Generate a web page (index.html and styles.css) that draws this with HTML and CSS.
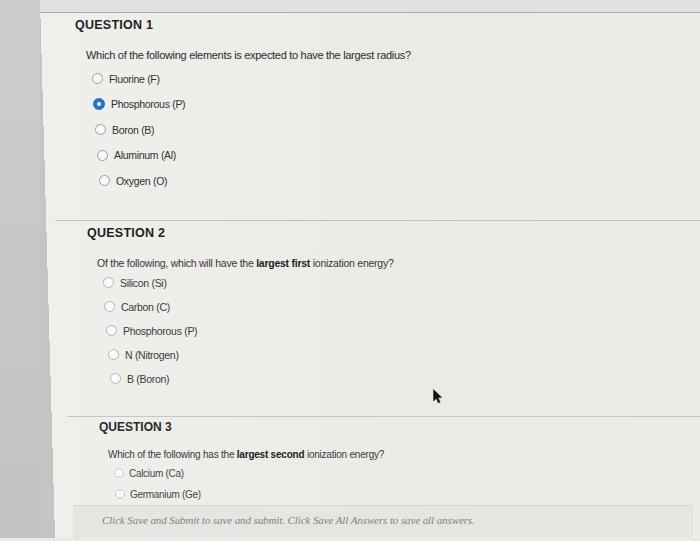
FILE: index.html
```html
<!DOCTYPE html>
<html lang="en">
<head>
<meta charset="utf-8">
<title>Quiz</title>
<link rel="stylesheet" href="styles.css">
</head>
<body>
<div class="screen">
  <div class="bezel"></div>
  <main class="page">
    <div class="topbar"></div>

    <section class="question q1">
      <h2 class="q-title">QUESTION 1</h2>
      <p class="q-text">Which of the following elements is expected to have the largest radius?</p>
      <ul class="opts">
        <li class="opt"><span class="radio"></span><span class="opt-label">Fluorine (F)</span></li>
        <li class="opt"><span class="radio radio-on"></span><span class="opt-label">Phosphorous (P)</span></li>
        <li class="opt"><span class="radio"></span><span class="opt-label">Boron (B)</span></li>
        <li class="opt"><span class="radio"></span><span class="opt-label">Aluminum (Al)</span></li>
        <li class="opt"><span class="radio"></span><span class="opt-label">Oxygen (O)</span></li>
      </ul>
    </section>

    <section class="question q2">
      <h2 class="q-title">QUESTION 2</h2>
      <p class="q-text">Of the following, which will have the <b>largest first</b> ionization energy?</p>
      <ul class="opts">
        <li class="opt"><span class="radio"></span><span class="opt-label">Silicon (Si)</span></li>
        <li class="opt"><span class="radio"></span><span class="opt-label">Carbon (C)</span></li>
        <li class="opt"><span class="radio"></span><span class="opt-label">Phosphorous (P)</span></li>
        <li class="opt"><span class="radio"></span><span class="opt-label">N (Nitrogen)</span></li>
        <li class="opt"><span class="radio"></span><span class="opt-label">B (Boron)</span></li>
      </ul>
    </section>

    <section class="question q3">
      <h2 class="q-title">QUESTION 3</h2>
      <p class="q-text">Which of the following has the <b>largest second</b> ionization energy?</p>
      <ul class="opts">
        <li class="opt"><span class="radio"></span><span class="opt-label">Calcium (Ca)</span></li>
        <li class="opt"><span class="radio"></span><span class="opt-label">Germanium (Ge)</span></li>
      </ul>
    </section>

    <div class="footer">Click Save and Submit to save and submit. Click Save All Answers to save all answers.</div>

    <svg class="cursor" width="10" height="15" viewBox="0 0 10 15" aria-hidden="true">
      <path d="M0.5 0.5 L0.5 12 L3.3 9.4 L5.4 14 L7.2 13.2 L5.1 8.7 L8.8 8.5 Z" fill="#111" stroke="#333" stroke-width="0.6" stroke-linejoin="round"/>
    </svg>
  </main>
</div>
<div class="bottom-strip"></div>
</body>
</html>
```

FILE: styles.css
```css
* { box-sizing: border-box; }

html, body {
  margin: 0;
  padding: 0;
  width: 700px;
  height: 541px;
  overflow: hidden;
  background: #c9c7c6;
  font-family: "Liberation Sans", Arial, sans-serif;
  color: #2f2f2f;
}

.screen {
  display: flex;
  height: 538px;
}

.bezel {
  width: 40px;
  flex: none;
  background: linear-gradient(to bottom, #cfcdcc, #c4c2c1);
}

.page {
  position: relative;
  flex: 1;
  display: flex;
  flex-direction: column;
  background:
    linear-gradient(to top right, #c6c4c3 50%, transparent 50%) left top / 15px 100% no-repeat,
    linear-gradient(to right, #efefeb, #ebebe6 60%, #ecece7);
}

.topbar {
  height: 13px;
  flex: none;
  background: #e2e1df;
  border-bottom: 1px solid #a9a9a7;
}

.question {
  display: flex;
  flex-direction: column;
}

.q1 { margin-left: 3px; padding-bottom: 26px; }
.q2 { margin-left: 15px; padding-bottom: 25px; border-top: 1px solid #c3c4c0; }
.q3 { margin-left: 27px; border-top: 1px solid #c6c7c3; }

.q-title {
  margin: 0;
  padding-left: 32px;
  font-size: 12.5px;
  line-height: 16px;
  font-weight: bold;
  letter-spacing: 0.25px;
  color: #1f1f1f;
}

.q1 .q-title { padding-top: 4px; }
.q2 .q-title { padding-top: 4px; }
.q3 .q-title { padding-top: 2px; font-size: 12px; letter-spacing: 0; color: #2a2a2a; }

.q-text {
  margin: 14px 0 0;
  padding-left: 43px;
  font-size: 11px;
  letter-spacing: -0.3px;
  line-height: 16px;
  color: #2b2b2b;
}

.q2 .q-text { padding-left: 42px; font-size: 10.5px; letter-spacing: -0.25px; color: #363636; }
.q3 .q-text { margin-top: 12px; padding-left: 41px; font-size: 10px; letter-spacing: -0.22px; color: #3a3a3a; }

.q-text b { color: #222; }

.opts {
  list-style: none;
  margin: 0;
  padding: 0 0 0 49px;
}

.q1 .opts { margin-top: 3px; }
.q2 .opts { padding-left: 48px; }
.q3 .opts { padding-left: 47px; }

.opt {
  display: flex;
  align-items: center;
  gap: 6px;
  height: 25.5px;
  font-size: 10.5px;
  letter-spacing: -0.3px;
  color: #303030;
}

/* the photographed screen leans slightly, so each row sits a little further right */
.opt:nth-child(2) { margin-left: 1px; }
.opt:nth-child(3) { margin-left: 3px; }
.opt:nth-child(4) { margin-left: 5px; }
.opt:nth-child(5) { margin-left: 7px; }

.q2 .opt { height: 24px; color: #3a3a3a; }
.q3 .opt { height: 21px; font-size: 10px; gap: 5px; color: #474747; }

.radio {
  flex: none;
  width: 11px;
  height: 11px;
  border-radius: 50%;
  border: 1px solid #9b9b9b;
  background: #fbfbfb;
}

.q2 .radio { border-color: #b4b4b2; }
.q3 .radio { width: 10px; height: 10px; border-color: #c4c4c2; }

.radio-on {
  width: 12px;
  height: 12px;
  border: 4.5px solid #1d74d3;
  background: #ffffff;
}

.footer {
  flex: 1;
  margin: 0 7px 0 33px;
  padding: 6px 0 0 29px;
  background: #e5e6e1;
  border-top: 1px solid #d6d7d2;
  font-family: "Liberation Serif", "Times New Roman", serif;
  font-style: italic;
  font-size: 11px;
  letter-spacing: -0.1px;
  line-height: 16px;
  color: #81817f;
}

.cursor {
  position: absolute;
  left: 393px;
  top: 389px;
}

.bottom-strip {
  height: 3px;
  background: #e9e9e9;
}
```
